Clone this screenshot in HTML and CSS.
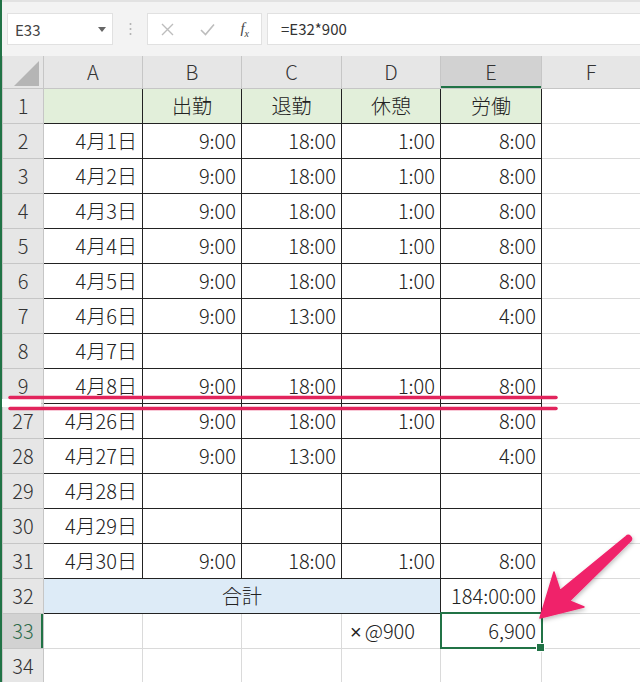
FILE: index.html
```html
<!DOCTYPE html>
<html lang="ja">
<head>
  <meta charset="UTF-8">
  <title>勤務時間表</title>
  <link rel="stylesheet" href="styles.css">
</head>
<body>
  <div class="window">
    <div class="toolbar">
      <div class="namebox">
        <span>E33</span>
        <svg class="caret" width="8" height="5" viewBox="0 0 8 5"><path d="M0 0H8L4 5Z" fill="#666"/></svg>
      </div>
      <div class="sep">
        <svg width="3" height="14" viewBox="0 0 3 14"><circle cx="1.5" cy="2" r="1" fill="#b0b0b0"/><circle cx="1.5" cy="7" r="1" fill="#b0b0b0"/><circle cx="1.5" cy="12" r="1" fill="#b0b0b0"/></svg>
      </div>
      <div class="fxbox">
        <svg width="13" height="13" viewBox="0 0 13 13"><path d="M1 1L12 12M12 1L1 12" stroke="#bdbdbd" stroke-width="1.4" fill="none"/></svg>
        <svg width="15" height="13" viewBox="0 0 15 13"><path d="M1 7L5.5 11.5L14 1.5" stroke="#bdbdbd" stroke-width="1.6" fill="none"/></svg>
        <span class="fx">f<sub>x</sub></span>
      </div>
      <div class="formula">=E32*900</div>
    </div>

    <table class="sheet">
      <colgroup>
        <col class="c-rh"><col class="c-a"><col class="c-b"><col class="c-c"><col class="c-d"><col class="c-e"><col class="c-f">
      </colgroup>
      <thead>
        <tr>
          <th class="corner"><svg width="25" height="25" viewBox="0 0 25 25"><path d="M25 0V25H0Z" fill="#b5b5b5"/></svg></th>
          <th>A</th><th>B</th><th>C</th><th>D</th><th class="hsel">E</th><th>F</th>
        </tr>
      </thead>
      <tbody>
        <tr><td class="rh">1</td><td class="t g"></td><td class="t g ctr">出勤</td><td class="t g ctr">退勤</td><td class="t g ctr">休憩</td><td class="t g ctr">労働</td><td></td></tr>
        <tr><td class="rh">2</td><td class="t">4月1日</td><td class="t">9:00</td><td class="t">18:00</td><td class="t">1:00</td><td class="t">8:00</td><td></td></tr>
        <tr><td class="rh">3</td><td class="t">4月2日</td><td class="t">9:00</td><td class="t">18:00</td><td class="t">1:00</td><td class="t">8:00</td><td></td></tr>
        <tr><td class="rh">4</td><td class="t">4月3日</td><td class="t">9:00</td><td class="t">18:00</td><td class="t">1:00</td><td class="t">8:00</td><td></td></tr>
        <tr><td class="rh">5</td><td class="t">4月4日</td><td class="t">9:00</td><td class="t">18:00</td><td class="t">1:00</td><td class="t">8:00</td><td></td></tr>
        <tr><td class="rh">6</td><td class="t">4月5日</td><td class="t">9:00</td><td class="t">18:00</td><td class="t">1:00</td><td class="t">8:00</td><td></td></tr>
        <tr><td class="rh">7</td><td class="t">4月6日</td><td class="t">9:00</td><td class="t">13:00</td><td class="t"></td><td class="t">4:00</td><td></td></tr>
        <tr><td class="rh">8</td><td class="t">4月7日</td><td class="t"></td><td class="t"></td><td class="t"></td><td class="t"></td><td></td></tr>
        <tr><td class="rh">9</td><td class="t">4月8日</td><td class="t">9:00</td><td class="t">18:00</td><td class="t">1:00</td><td class="t">8:00</td><td></td></tr>
        <tr><td class="rh">27</td><td class="t">4月26日</td><td class="t">9:00</td><td class="t">18:00</td><td class="t">1:00</td><td class="t">8:00</td><td></td></tr>
        <tr><td class="rh">28</td><td class="t">4月27日</td><td class="t">9:00</td><td class="t">13:00</td><td class="t"></td><td class="t">4:00</td><td></td></tr>
        <tr><td class="rh">29</td><td class="t">4月28日</td><td class="t"></td><td class="t"></td><td class="t"></td><td class="t"></td><td></td></tr>
        <tr><td class="rh">30</td><td class="t">4月29日</td><td class="t"></td><td class="t"></td><td class="t"></td><td class="t"></td><td></td></tr>
        <tr><td class="rh">31</td><td class="t">4月30日</td><td class="t">9:00</td><td class="t">18:00</td><td class="t">1:00</td><td class="t">8:00</td><td></td></tr>
        <tr><td class="rh">32</td><td class="t b ctr" colspan="4">合計</td><td class="t">184:00:00</td><td></td></tr>
        <tr><td class="rh rsel">33</td><td></td><td></td><td></td><td class="lft"><span class="times">×</span>@900</td><td class="sel">6,900</td><td></td></tr>
        <tr><td class="rh">34</td><td></td><td></td><td></td><td></td><td></td><td></td></tr>
      </tbody>
    </table>

    <svg class="marks" width="640" height="682" viewBox="0 0 640 682">
      <defs>
        <filter id="shadow" x="-20%" y="-20%" width="140%" height="140%">
          <feDropShadow dx="1" dy="2" stdDeviation="2" flood-color="#000" flood-opacity="0.25"/>
        </filter>
      </defs>
      <rect x="0" y="399" width="41" height="8" fill="#fff"/>
      <line x1="10" y1="397.5" x2="556" y2="397.5" stroke="#e2245c" stroke-width="3.5" stroke-linecap="round"/>
      <line x1="10" y1="408.5" x2="556" y2="408.5" stroke="#e2245c" stroke-width="3.5" stroke-linecap="round"/>
      <path d="M540 618L554 572L560 590.5L626 536.5A3 3 0 0 1 630.5 541L569.5 601L584 607Z" fill="#f0246a" stroke="#f0246a" stroke-width="1.5" stroke-linejoin="round" filter="url(#shadow)"/>
    </svg>
  </div>
</body>
</html>
```

FILE: styles.css
```css
* {
  box-sizing: border-box;
}
body {
  margin: 0;
  font-family: "Noto Sans CJK JP", sans-serif;
  color: #333;
  background: #fff;
}
.window {
  position: relative;
  width: 640px;
  height: 682px;
  overflow: hidden;
  border-left: 2px solid #217346;
}

/* formula bar */
.toolbar {
  height: 56px;
  background: #f3f3f3;
  border-top: 2px solid #e2e2e2;
  display: flex;
  align-items: flex-start;
  padding: 11px 0 0 5px;
}
.namebox {
  width: 106px;
  height: 32px;
  background: #fff;
  border: 1px solid #e1e1e1;
  display: flex;
  align-items: center;
  justify-content: space-between;
  padding: 0 6px 0 7px;
  font-size: 15px;
  color: #444;
}
.caret {
  margin-top: 1px;
}
.sep {
  width: 34px;
  height: 32px;
  display: flex;
  align-items: center;
  justify-content: center;
}
.fxbox {
  width: 115px;
  height: 32px;
  background: #fff;
  border: 1px solid #e1e1e1;
  display: flex;
  align-items: center;
  justify-content: space-between;
  padding: 0 12px 0 13px;
}
.fx {
  font-family: "Liberation Serif", serif;
  font-style: italic;
  font-size: 15px;
  color: #444;
}
.fx sub {
  font-size: 10px;
}
.formula {
  flex: 1;
  height: 32px;
  margin-left: 5px;
  background: #fff;
  border: 1px solid #e1e1e1;
  border-right: none;
  padding-left: 13px;
  font-size: 15px;
  line-height: 30px;
  color: #333;
}

/* grid */
.sheet {
  border-collapse: collapse;
  table-layout: fixed;
  width: 638px;
  font-size: 20px;
  font-weight: 300;
  color: #222;
}
.c-rh { width: 41px; }
.c-a { width: 99px; }
.c-b { width: 99px; }
.c-c { width: 100px; }
.c-d { width: 99px; }
.c-e { width: 101px; }
.c-f { width: 99px; }

th {
  height: 32px;
  padding: 0;
  background: #e6e6e6;
  border: 1px solid #c6c6c6;
  border-top: none;
  font-weight: 300;
  color: #333;
  text-align: center;
}
th.corner {
  text-align: right;
  vertical-align: bottom;
  padding: 0 4px 2px 0;
  line-height: 0;
}
th.hsel {
  background: #d2d2d2;
  box-shadow: inset 0 -2px #217346;
}
tbody tr {
  height: 35px;
}
td {
  padding: 0 5px;
  border: 1px solid #dadada;
  text-align: right;
  white-space: nowrap;
}
td.rh {
  background: #e6e6e6;
  border-color: #c6c6c6;
  text-align: center;
  padding: 0;
  color: #333;
}
td.rsel {
  background: #d2d2d2;
  color: #2e6b4a;
  box-shadow: inset -2px 0 #217346;
}
td.t {
  border: 1px solid #222;
}
.g {
  background: #e2efda;
}
.b {
  background: #ddebf7;
}
td.ctr {
  text-align: center;
}
td.lft {
  text-align: left;
  padding-left: 8px;
}
.times {
  font-family: "Liberation Sans", sans-serif;
  margin-right: 3px;
}
td.sel {
  position: relative;
  outline: 2px solid #217346;
  outline-offset: -1px;
}
td.sel::after {
  content: "";
  position: absolute;
  right: -4px;
  bottom: -4px;
  width: 7px;
  height: 7px;
  background: #217346;
  border: 1px solid #fff;
}

.marks {
  position: absolute;
  left: -2px;
  top: 0;
  pointer-events: none;
}
```
